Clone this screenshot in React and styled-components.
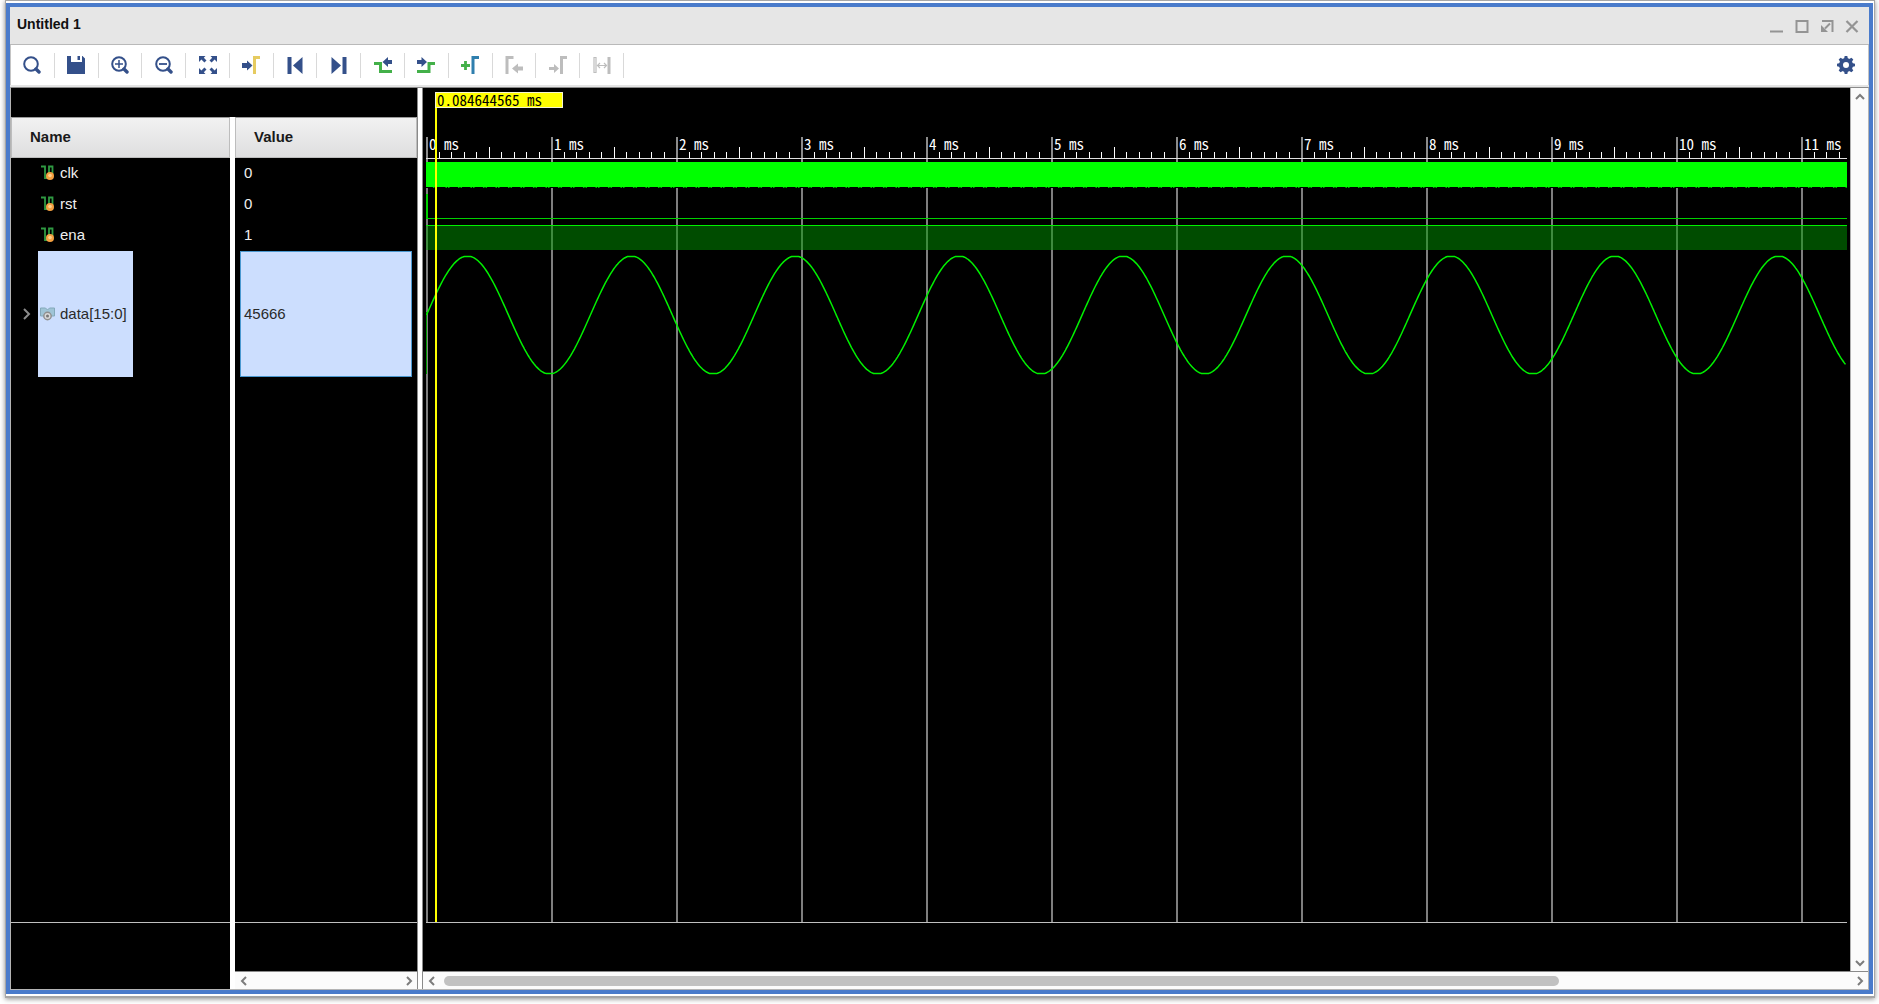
import styled, { createGlobalStyle } from 'styled-components';

const GlobalStyle = createGlobalStyle`
    * {
        box-sizing: border-box;
    }

    body {
        margin: 0;
        background: #fff;
        color: #1a1a1a;
        font: 15px/20px "Liberation Sans", Arial, sans-serif;
    }

    button {
        padding: 0;
        border: 0;
        background: none;
        color: inherit;
        display: flex;
        align-items: center;
        justify-content: center;
    }

    svg {
        display: block;
    }
`;

const Page = styled.div`
    display: flex;
    height: 100vh;
    padding: 0 4px 6px 5px;
`;

const Frame = styled.div`
    flex: 1;
    display: flex;
    min-width: 0;
    padding: 2px 1px 2px 0;
    border: 1px solid #a6a6a6;
    border-bottom-width: 2px;
    background: #fff;
    box-shadow: 0 1px 5px rgba(0, 0, 0, 0.45);
`;

const Window = styled.main`
    flex: 1;
    display: flex;
    flex-direction: column;
    min-width: 0;
    border: 4px solid #4a7bcb;
    background: #fff;
`;

const TitleBar = styled.header`
    flex: none;
    display: flex;
    align-items: center;
    justify-content: space-between;
    height: 38px;
    padding: 0 10px 0 7px;
    border-bottom: 1px solid #b9b9b9;
    background: #e6e6e6;
`;

const Title = styled.h1`
    margin: 0;
    padding-bottom: 4px;
    font-size: 14px;
    line-height: 20px;
    color: #111;
`;

const WindowButtons = styled.div`
    display: flex;
    gap: 11px;
    color: #949494;
`;

const Toolbar = styled.div`
    flex: none;
    display: flex;
    align-items: center;
    justify-content: space-between;
    height: 42px;
    padding: 0 14px 0 1px;
    border-bottom: 2px solid #e4e4e4;
    box-shadow: inset 1px 0 #c4c4c4, inset -1px 0 #c4c4c4;
`;

const Tools = styled.div`
    display: grid;
    grid-template-columns: repeat(14, 1fr);
    width: 613px;
`;

const ToolButton = styled.button`
    height: 25px;
    border-right: 1px solid #d9d9d9;
`;

const Panes = styled.div`
    flex: 1;
    display: flex;
    min-height: 0;
    border: 1px solid #b4b4b4;
    border-top-color: #8a8a8a;
    background: #fff;
`;

const Signals = styled.section`
    flex: none;
    display: flex;
    flex-direction: column;
    width: 407px;
    border-right: 1px solid #8a8a8a;
    background: #000;
`;

const SignalColumns = styled.div`
    flex: 1;
    display: grid;
    grid-template-columns: 219px 1fr;
    gap: 5px;
    margin-top: 29px;
    background: #fff;
`;

const Column = styled.div`
    display: flex;
    flex-direction: column;
    min-width: 0;
    background: #000;
`;

const ColumnBody = styled.div`
    flex: 1;
    border-bottom: 1px solid #c0c0c0;
`;

const ColumnFooter = styled.div`
    flex: none;
    height: ${props => props.$height}px;
`;

const SignalTable = styled.table`
    width: 100%;
    border-spacing: 0;
    color: #f0f0f0;
`;

const HeaderCell = styled.th`
    height: 41px;
    padding: 0 18px 2px;
    border: 1px solid #bdbdbd;
    border-top-color: #9a9a9a;
    background: linear-gradient(#f2f2f2, #dededf);
    color: #1a1a1a;
    text-align: left;
`;

const Cell = styled.td`
    height: ${props => (props.$tall ? 126 : 31)}px;
    padding: ${props => props.$pad || 0};
`;

const NameLine = styled.div`
    display: flex;
    align-items: center;
    height: ${props => (props.$tall ? 126 : 31)}px;
    padding-bottom: ${props => (props.$tall ? 0 : 2)}px;
`;

const Expander = styled.button`
    width: 27px;
    height: 20px;
    padding-left: 4px;
    color: #8c8c8c;
`;

const SignalName = styled.span`
    display: flex;
    align-items: center;
    gap: 5px;
    height: 100%;
    padding: 0 6px 0 2px;
    background: ${props => (props.$selected ? '#ccdefe' : 'none')};
    color: ${props => (props.$selected ? '#2a2a2a' : 'inherit')};
`;

const SignalValue = styled.div`
    display: flex;
    align-items: center;
    height: ${props => (props.$selected ? 126 : 31)}px;
    padding: 0 3px ${props => (props.$selected ? 0 : 2)}px;
    border: 1px solid ${props => (props.$selected ? '#4a98d0' : 'transparent')};
    border-width: ${props => (props.$selected ? '1px' : '0 1px')};
    background: ${props => (props.$selected ? '#ccdefe' : 'none')};
    color: ${props => (props.$selected ? '#2a2a2a' : 'inherit')};
`;

const WaveSection = styled.section`
    flex: 1;
    display: flex;
    flex-direction: column;
    min-width: 0;
    margin-left: 4px;
    border-left: 1px solid #8a8a8a;
`;

const WaveRow = styled.div`
    flex: 1;
    display: flex;
    min-height: 0;
`;

const WavePane = styled.div`
    flex: 1;
    min-width: 0;
    padding: 0 3px 48px;
    background: #000;
`;

const WaveSvg = styled.svg`
    width: 100%;
    height: 100%;
    overflow: hidden;
    font: 15px "Noto Sans CJK SC", "Liberation Mono", monospace;
    font-feature-settings: "hwid";
`;

const ScrollBar = styled.div`
    flex: none;
    display: flex;
    flex-direction: ${props => (props.$vertical ? 'column' : 'row')};
    align-items: center;
    justify-content: space-between;
    background: #fbfbfb;
    color: #7c7c7c;
    ${props =>
        props.$vertical
            ? 'width: 18px; border-left: 1px solid #b0b0b0;'
            : 'height: 18px; border-top: 1px solid #8a8a8a;'}
`;

const ScrollButton = styled.button`
    width: 17px;
    height: 17px;
`;

const ScrollTrack = styled.div`
    flex: 1;
    padding: 0 4px;
`;

const ScrollThumb = styled.div`
    width: 79.5%;
    height: 10px;
    border-radius: 5px;
    background: #c1c1c1;
`;

const NAVY = '#34508a';
const GREEN = '#43b049';
const GRAY = '#bdbdbd';

function Icon({ children, size = 18 }) {
    return (
        <svg width={size} height={size} viewBox={`0 0 ${size} ${size}`} fill="none">
            {children}
        </svg>
    );
}

function Lens({ children }) {
    return (
        <Icon>
            <circle cx="8" cy="8" r="6.8" stroke={NAVY} strokeWidth="2" />
            <path d="M13 13l3 3" stroke={NAVY} strokeWidth="3.4" strokeLinecap="round" />
            {children}
        </Icon>
    );
}

const tools = [
    { label: 'Search', icon: <Lens /> },
    {
        label: 'Save',
        icon: (
            <Icon>
                <path d="M0 0h4v6h11V0h.5L18 2.500V18H0z" fill={NAVY} />
                <path d="M10.500 0h2.500v4h-2.500z" fill={NAVY} />
            </Icon>
        ),
    },
    { label: 'Zoom in', icon: <Lens><path d="M4 8h8M8 4v8" stroke={NAVY} strokeWidth="1.500" /></Lens> },
    { label: 'Zoom out', icon: <Lens><path d="M4 8h8" stroke={NAVY} strokeWidth="1.800" /></Lens> },
    {
        label: 'Zoom fit',
        icon: (
            <Icon>
                <path d="M0 0h6.500L4.800 1.700l2.700 2.700-2.100 2.100-3-3L0 6zM18 0v6l-2.400-2.500-3 3-2.100-2.100 2.700-2.700L11.500 0zM0 18v-6l2.400 2.500 3-3 2.100 2.100-2.700 2.700L6.500 18zM18 18h-6.500l1.700-1.700-2.700-2.700 2.100-2.100 3 3L18 12z" fill={NAVY} />
            </Icon>
        ),
    },
    {
        label: 'Go to cursor',
        icon: (
            <Icon>
                <path d="M0 7h5V4.500l5.500 5-5.500 5V12H0z" fill={NAVY} />
                <path d="M12.500 18V1.500H18" stroke="#e6cb60" strokeWidth="3" />
            </Icon>
        ),
    },
    {
        label: 'Go to start',
        icon: (
            <Icon>
                <path d="M1.500 1h4v17h-4zM16.500 1v17L7 9.500z" fill={NAVY} />
            </Icon>
        ),
    },
    {
        label: 'Go to end',
        icon: (
            <Icon>
                <path d="M12.500 1h4v17h-4zM1.500 1v17L11 9.500z" fill={NAVY} />
            </Icon>
        ),
    },
    {
        label: 'Previous transition',
        icon: (
            <Icon>
                <path d="M0 7.500h6.500v8H18" stroke={GREEN} strokeWidth="3" />
                <path d="M18 4h-4V1L8.500 6l5.500 5V8h4z" fill={NAVY} />
            </Icon>
        ),
    },
    {
        label: 'Next transition',
        icon: (
            <Icon>
                <path d="M0 15.500h12v-8h6" stroke={GREEN} strokeWidth="3" />
                <path d="M0 4h4.500V1L10 6l-5.500 5V8H0z" fill={NAVY} />
            </Icon>
        ),
    },
    {
        label: 'Add marker',
        icon: (
            <Icon>
                <path d="M0 9.500h9M4.500 5v9" stroke={GREEN} strokeWidth="2.800" />
                <path d="M12 18V1.500h6" stroke="#2f7fae" strokeWidth="3" />
            </Icon>
        ),
    },
    {
        label: 'Previous marker',
        icon: (
            <Icon>
                <path d="M2 18V1.500h6.500" stroke={GRAY} strokeWidth="3" />
                <path d="M18 10.500h-5V7.500l-6 5 6 5v-3h5z" fill={GRAY} />
            </Icon>
        ),
    },
    {
        label: 'Next marker',
        icon: (
            <Icon>
                <path d="M0 11h5V8l5 4.500-5 4.500v-3H0z" fill={GRAY} />
                <path d="M12.500 18V1.500H18" stroke={GRAY} strokeWidth="3" />
            </Icon>
        ),
    },
    {
        label: 'Swap cursors',
        icon: (
            <Icon>
                <path d="M1 1.500h2v15H1zM4 9.500h10M7 7L4.500 9.500 7 12M11 7l2.500 2.500L11 12" stroke={GRAY} strokeWidth="1.200" />
                <path d="M14.500 1h3v17h-3z" fill={GRAY} />
            </Icon>
        ),
    },
];

function GearIcon() {
    const teeth = [0, 45, 90, 135, 180, 225, 270, 315];
    return (
        <Icon>
            <circle cx="9" cy="9" r="5" stroke={NAVY} strokeWidth="4" />
            {teeth.map(angle => (
                <path key={angle} d="M7 3l.7-3h2.600L11 3z" fill={NAVY} transform={`rotate(${angle} 9 9)`} />
            ))}
        </Icon>
    );
}

const windowButtons = [
    { label: 'Minimize', icon: <path d="M0 12.500h13" stroke="currentColor" strokeWidth="2" /> },
    { label: 'Maximize', icon: <path d="M1.500 2h11v11h-11z" stroke="currentColor" strokeWidth="2" /> },
    {
        label: 'Float',
        icon: (
            <>
                <path d="M2 2h10.500v11M10 4.500L5 9.500" stroke="currentColor" strokeWidth="2" />
                <path d="M1 6v7h7z" fill="currentColor" />
            </>
        ),
    },
    { label: 'Close', icon: <path d="M1.500 2l11 11M12.500 2l-11 11" stroke="currentColor" strokeWidth="2.200" /> },
];

const arrows = {
    up: 'M2 8l4-4 4 4',
    down: 'M2 4l4 4 4-4',
    left: 'M8 2L4 6l4 4',
    right: 'M4 2l4 4-4 4',
    expand: 'M3 1l5 5-5 5',
};

function Arrow({ to }) {
    return (
        <Icon size={12}>
            <path d={arrows[to]} stroke="currentColor" strokeWidth="2" />
        </Icon>
    );
}

function WireIcon() {
    return (
        <svg width="14" height="16" viewBox="0 0 14 16" fill="none">
            <path d="M0 1.500h4V13h4V1.500h3.500V9" stroke="#2f9a42" strokeWidth="1.800" />
            <circle cx="9" cy="11" r="4" fill="#f5a040" />
            <circle cx="9" cy="10.500" r="1.800" fill="#ffd08a" />
        </svg>
    );
}

function BusIcon() {
    return (
        <svg width="15" height="14" viewBox="0 0 15 14" fill="none">
            <path d="M.5 1h5L7.500 3l2-2h5v8h-14z" fill="#9fc4d6" stroke="#84a9ba" />
            <circle cx="7.500" cy="9" r="3.700" fill="#d8d8d8" stroke="#8f8f8f" strokeWidth="1.400" />
            <circle cx="7.500" cy="9" r="1.500" fill="#777" />
        </svg>
    );
}

const signals = [
    { name: 'clk', value: '0' },
    { name: 'rst', value: '0' },
    { name: 'ena', value: '1' },
    { name: 'data[15:0]', value: '45666', bus: true },
];

const MS = 125; // pixels per millisecond
const LAST_MS = 11;
const PERIOD = 163.9;

const ticks = [];
for (let i = 0; i < (LAST_MS + 1) * 10; i++) {
    if (i % 10 !== 0) ticks.push({ x: Math.round((i * MS) / 10), top: i % 5 === 0 ? 59 : 64 });
}

// the peaks are cut flat, the samples are whole steps
const wavePoints = [];
for (let x = 0; x <= LAST_MS * MS + 44; x++) {
    const level = 59 * Math.sin((2 * Math.PI * x) / PERIOD);
    wavePoints.push(`${x + 0.5},${(227 - Math.max(-58.5, Math.min(58.5, level))).toFixed(1)}`);
}

function WaveChart() {
    const majors = Array.from({ length: LAST_MS + 1 }, (_, i) => i);
    return (
        <WaveSvg role="img" aria-label="Waveform">
            {/* clock */}
            <rect y="74" width="100%" height="25" fill="#00ff00" />
            <line x1="7" y1="99.500" x2="100%" y2="99.500" stroke="#00b000" strokeDasharray="1.500 1 1.500 8.500" />
            {/* time grid */}
            {majors.map(i => (
                <g key={i}>
                    <rect x={i * MS} y="49" width="2" height="25" fill="#8c8c8c" />
                    <rect x={i * MS} y="100" width="2" height="100%" fill="#7e7e7e" />
                    <text x={i * MS + 3} y="62" fill="#fff">{i} ms</text>
                </g>
            ))}
            {ticks.map(t => (
                <rect key={t.x} x={t.x} y={t.top} width="1" height={70 - t.top} fill="#fff" />
            ))}
            <rect y="70" width="100%" height="1" fill="#e0e0e0" />
            {/* reset */}
            <path d="M1 106v24" stroke="#00d000" strokeWidth="2" />
            <rect y="130" width="100%" height="1" fill="#00d000" />
            {/* enable */}
            <rect y="137" width="100%" height="25" fill="#009800" fillOpacity="0.5" />
            <rect y="137" width="100%" height="1" fill="#00f000" />
            {/* data */}
            <path d="M.5 224v62" stroke="#009800" />
            <polyline points={wavePoints.join(' ')} fill="none" stroke="#00f000" strokeWidth="1.500" />
            {/* cursor */}
            <rect x="9" y="19" width="2" height="100%" fill="#ffff00" />
            <rect x="9.500" y="4.500" width="127" height="15" fill="#ffff00" stroke="#f4f4d0" />
            <text x="11" y="18" fill="#000">0.084644565 ms</text>
            <svg y="100%" overflow="visible">
                <rect y="-1" width="100%" height="1" fill="#c0c0c0" />
            </svg>
        </WaveSvg>
    );
}

function App() {
    return (
        <Page>
            <GlobalStyle />
            <Frame>
                <Window>
                    <TitleBar>
                        <Title>Untitled 1</Title>
                        <WindowButtons>
                            {windowButtons.map(b => (
                                <button key={b.label} aria-label={b.label}>
                                    <Icon size={14}>{b.icon}</Icon>
                                </button>
                            ))}
                        </WindowButtons>
                    </TitleBar>
                    <Toolbar>
                        <Tools>
                            {tools.map(t => (
                                <ToolButton key={t.label} aria-label={t.label}>{t.icon}</ToolButton>
                            ))}
                        </Tools>
                        <button aria-label="Settings"><GearIcon /></button>
                    </Toolbar>
                    <Panes>
                        <Signals>
                            <SignalColumns>
                                <Column>
                                    <ColumnBody>
                                        <SignalTable>
                                            <thead><tr><HeaderCell>Name</HeaderCell></tr></thead>
                                            <tbody>
                                                {signals.map(s => (
                                                    <tr key={s.name}>
                                                        <Cell $tall={s.bus} $pad={s.bus ? '0' : '0 0 0 28px'}>
                                                            <NameLine $tall={s.bus}>
                                                                {s.bus && <Expander aria-label="Expand"><Arrow to="expand" /></Expander>}
                                                                <SignalName $selected={s.bus}>
                                                                    {s.bus ? <BusIcon /> : <WireIcon />}
                                                                    {s.name}
                                                                </SignalName>
                                                            </NameLine>
                                                        </Cell>
                                                    </tr>
                                                ))}
                                            </tbody>
                                        </SignalTable>
                                    </ColumnBody>
                                    <ColumnFooter $height={66} />
                                </Column>
                                <Column>
                                    <ColumnBody>
                                        <SignalTable>
                                            <thead><tr><HeaderCell>Value</HeaderCell></tr></thead>
                                            <tbody>
                                                {signals.map(s => (
                                                    <tr key={s.name}>
                                                        <Cell $tall={s.bus} $pad="0 5px">
                                                            <SignalValue $selected={s.bus}>{s.value}</SignalValue>
                                                        </Cell>
                                                    </tr>
                                                ))}
                                            </tbody>
                                        </SignalTable>
                                    </ColumnBody>
                                    <ColumnFooter $height={48} />
                                    <ScrollBar>
                                        <ScrollButton aria-label="Scroll left"><Arrow to="left" /></ScrollButton>
                                        <ScrollButton aria-label="Scroll right"><Arrow to="right" /></ScrollButton>
                                    </ScrollBar>
                                </Column>
                            </SignalColumns>
                        </Signals>
                        <WaveSection>
                            <WaveRow>
                                <WavePane><WaveChart /></WavePane>
                                <ScrollBar $vertical>
                                    <ScrollButton aria-label="Scroll up"><Arrow to="up" /></ScrollButton>
                                    <ScrollButton aria-label="Scroll down"><Arrow to="down" /></ScrollButton>
                                </ScrollBar>
                            </WaveRow>
                            <ScrollBar>
                                <ScrollButton aria-label="Scroll left"><Arrow to="left" /></ScrollButton>
                                <ScrollTrack><ScrollThumb /></ScrollTrack>
                                <ScrollButton aria-label="Scroll right"><Arrow to="right" /></ScrollButton>
                            </ScrollBar>
                        </WaveSection>
                    </Panes>
                </Window>
            </Frame>
        </Page>
    );
}

export default App;
